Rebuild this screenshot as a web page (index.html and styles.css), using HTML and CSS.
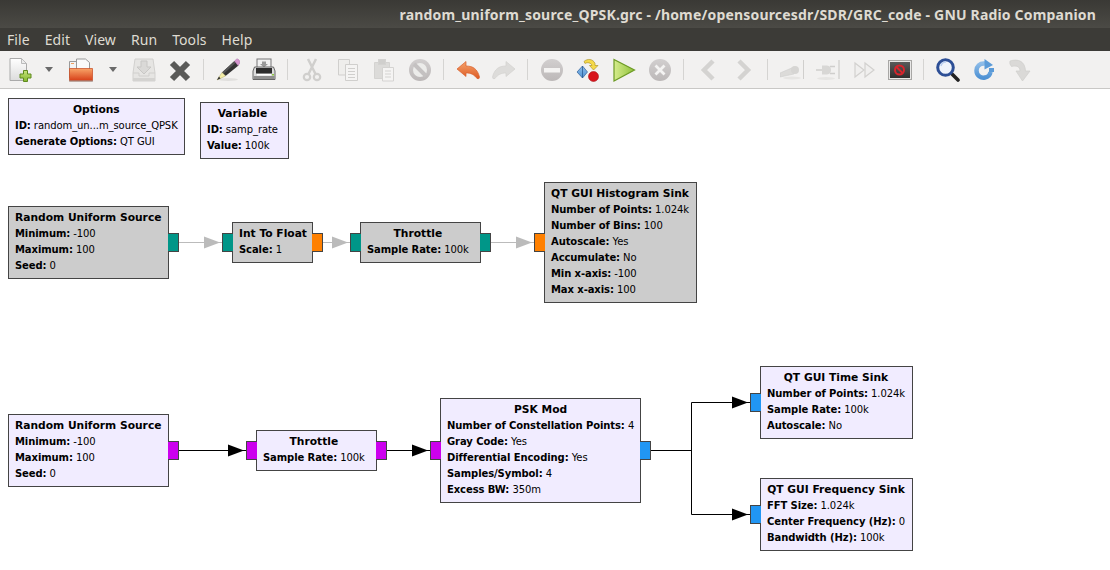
FILE: index.html
```html
<!DOCTYPE html>
<html lang="en">
<head>
<meta charset="utf-8">
<title>GNU Radio Companion</title>
<link rel="stylesheet" href="styles.css">
</head>
<body>
<div class="app">
  <header class="titlebar"><span>random_uniform_source_QPSK.grc - /home/opensourcesdr/SDR/GRC_code - GNU Radio Companion</span></header>
  <nav class="menubar">
    <span class="menu">File</span><span class="menu">Edit</span><span class="menu">View</span><span class="menu">Run</span><span class="menu">Tools</span><span class="menu">Help</span>
  </nav>
  <div class="toolbar">
    <svg width="0" height="0" class="defs">
      <defs>
        <linearGradient id="gPage" x1="0" y1="0" x2="0" y2="1"><stop offset="0" stop-color="#fff"/><stop offset="1" stop-color="#dcdcdc"/></linearGradient>
        <linearGradient id="gFolder" x1="0" y1="0" x2="0" y2="1"><stop offset="0" stop-color="#f8a468"/><stop offset="1" stop-color="#d63c16"/></linearGradient>
        <linearGradient id="gGreen" x1="0" y1="0" x2="0" y2="1"><stop offset="0" stop-color="#c7e37a"/><stop offset="1" stop-color="#84b72e"/></linearGradient>
        <linearGradient id="gPlay" x1="0" y1="0" x2="1" y2="0"><stop offset="0" stop-color="#d6ec8d"/><stop offset="1" stop-color="#8fc13a"/></linearGradient>
        <linearGradient id="gOrange" x1="0" y1="0" x2="0" y2="1"><stop offset="0" stop-color="#f6a26a"/><stop offset="1" stop-color="#dc5a24"/></linearGradient>
        <linearGradient id="gGrey" x1="0" y1="0" x2="0" y2="1"><stop offset="0" stop-color="#d2cfcf"/><stop offset="1" stop-color="#bcb8b8"/></linearGradient>
        <linearGradient id="gBlue" x1="0" y1="0" x2="0" y2="1"><stop offset="0" stop-color="#8dbce8"/><stop offset="1" stop-color="#4f92d4"/></linearGradient>
        <linearGradient id="gBtn" x1="0" y1="0" x2="0" y2="1"><stop offset="0" stop-color="#5a5a5a"/><stop offset="1" stop-color="#2e2e2e"/></linearGradient>
      </defs>
    </svg>
    <button class="tb" aria-label="New"><svg width="24" height="24" viewBox="0 0 24 24"><path d="M2 .5H13.500L18.500 5.500V22.500H2Z" fill="url(#gPage)" stroke="#aaa"/><path d="M13.500 .5V5.500H18.500Z" fill="#ececec" stroke="#bbb"/><path d="M15.500 12.500H19.500V16H23V20H19.500V23.500H15.500V20H12V16H15.500Z" fill="url(#gGreen)" stroke="#5f8a1e"/></svg></button>
    <button class="drop" aria-label="New menu"><i class="caret"></i></button>
    <button class="tb" aria-label="Open"><svg width="24" height="24" viewBox="0 0 24 24"><path d="M.5 3.500H11V20H.5Z" fill="#f4f4f4" stroke="#999"/><path d="M7.500 1H16.500L20.500 4.500V20H7.500Z" fill="#fafafa" stroke="#999"/><rect x="2" y="5" width="3" height="1" fill="#f0a060"/><path d="M.5 10.500H23.500V23H.5Z" fill="url(#gFolder)" stroke="#c9471e" stroke-width=".7"/><path d="M0 23H24" stroke="#999"/></svg></button>
    <button class="drop wide" aria-label="Open menu"><i class="caret"></i></button>
    <button class="tb" aria-label="Save"><svg width="24" height="24" viewBox="0 0 24 24"><path d="M3 1H21L23 15V23H1V15Z" fill="#e6e5e3" stroke="#d2d1cf"/><path d="M1 15H7V18H17V15H23" fill="none" stroke="#d0cfcd"/><path d="M9 3H15V9H19L12 16 5 9H9Z" fill="#dad9d7" stroke="#c8c7c5"/><rect x="1" y="20" width="22" height="3" fill="#d4d3d1"/></svg></button>
    <button class="tb" aria-label="Close"><svg width="24" height="24" viewBox="0 0 24 24"><path d="M4 5 20 21M20 5 4 21" stroke="#5a5a58" stroke-width="6"/></svg></button>
    <i class="sep"></i>
    <button class="tb" aria-label="Rename"><svg width="24" height="24" viewBox="0 0 24 24"><ellipse cx="12" cy="21.500" rx="10" ry="1.500" fill="#e0dfdd"/><path d="M6 14.500 18.500 3 22.500 7.500 9.500 18Z" fill="#333"/><path d="M6 14.500 18.500 3 20 4.500 7.500 16Z" fill="#555"/><path d="M18.500 3 20.500 1.200Q21.500 .5 22.500 1.500L24 3.500Q24.500 4.500 23.500 5.500L22 7.500Z" fill="#d596cf" stroke="#a56aa0" stroke-width=".5"/><path d="M6 14.500 9.500 18 1 22Z" fill="#f3eda6" stroke="#b3ac6a" stroke-width=".5"/><path d="M1 22 3 18.500 4.500 20.500Z" fill="#333"/></svg></button>
    <button class="tb" aria-label="Print"><svg width="24" height="24" viewBox="0 0 24 24"><rect x="5" y="1" width="14" height="10" fill="#f2f2f2" stroke="#777"/><path d="M10 3.500H14V6H16L12 9.500 8 6H10Z" fill="#9a9a9a"/><path d="M2.500 9H21.500L23 13V21.500H1V13Z" fill="#dcdcdc" stroke="#666"/><rect x="4" y="10" width="16" height="5.500" fill="#2c2c2c"/><rect x="1.500" y="18" width="21" height="3" fill="#8f8f8f"/><rect x="5" y="16" width="14" height="1.500" fill="#fff"/><rect x="20" y="16" width="2" height="1.500" fill="#8cc63f"/></svg></button>
    <i class="sep"></i>
    <button class="tb" aria-label="Cut"><svg width="24" height="24" viewBox="0 0 24 24" fill="none" stroke="#d0cfcd"><path d="M8 1 15.500 16M16 1 8.500 16" stroke-width="2.500"/><circle cx="7" cy="19" r="3.200" stroke-width="2.200"/><circle cx="17" cy="19" r="3.200" stroke-width="2.200"/></svg></button>
    <button class="tb" aria-label="Copy"><svg width="24" height="24" viewBox="0 0 24 24" fill="#efeeec" stroke="#d0cfcd"><path d="M2.500 1.500H13.500V17H2.500Z"/><path d="M9.500 6.500H21.500V22.500H9.500Z" fill="#f5f4f3"/><path d="M12 10.500H19M12 13.500H19M12 16.500H19M12 19.500H19" fill="none"/></svg></button>
    <button class="tb" aria-label="Paste"><svg width="24" height="24" viewBox="0 0 24 24" stroke="#d4d3d1"><path d="M2.500 4.500H17.500V20.500H2.500Z" fill="#dcdbd9"/><rect x="6.500" y="1.500" width="7" height="5" fill="#d0cfcd"/><path d="M10.500 9.500H21.500V23H10.500Z" fill="#f5f4f3"/><path d="M13 13H19M13 16H19M13 19H19" fill="none"/></svg></button>
    <button class="tb" aria-label="Delete"><svg width="24" height="24" viewBox="0 0 24 24"><circle cx="12" cy="12" r="11" fill="url(#gGrey)"/><circle cx="12" cy="12" r="7" fill="#ececea"/><path d="M6 6 18 18" stroke="#c4c1c1" stroke-width="4"/></svg></button>
    <i class="sep"></i>
    <button class="tb" aria-label="Undo"><svg width="24" height="24" viewBox="0 0 24 24"><path d="M1 11 10 3.500V8C17 8 21.500 11 23.500 19Q23.500 21.500 21 20.500C18 16.500 15 15 10 15V18.500Z" fill="url(#gOrange)" stroke="#d8602c" stroke-width=".7"/></svg></button>
    <button class="tb" aria-label="Redo"><svg width="24" height="24" viewBox="0 0 24 24"><path d="M23 11 14 3.500V8C7 8 2.500 11 .5 19Q.5 21.500 3 20.500C6 16.500 9 15 14 15V18.500Z" fill="#dddcda" stroke="#d2d1cf" stroke-width=".7"/></svg></button>
    <i class="sep"></i>
    <button class="tb" aria-label="Disable"><svg width="24" height="24" viewBox="0 0 24 24"><circle cx="12" cy="12" r="11" fill="url(#gGrey)"/><rect x="4" y="10" width="16" height="4.500" fill="#f4f3f2"/></svg></button>
    <button class="tb" aria-label="Toggle"><svg width="24" height="24" viewBox="0 0 24 24"><path d="M6.500 8 11.500 14 6.500 20 1 14Z" fill="url(#gBlue)" stroke="#2f5f98" stroke-width=".7"/><path d="M6.500 8V20" stroke="#204f88" stroke-width=".7"/><path d="M8 3.500C11 .5 17 .5 19 5.500V7.500H22L17.500 12 13.500 7.500H16C15 4.500 11 4 9 5.500Z" fill="#f5d94a" stroke="#b0962a" stroke-width=".7"/><circle cx="17.500" cy="18.500" r="5" fill="#d8141c" stroke="#a81016" stroke-width=".6"/></svg></button>
    <button class="tb" aria-label="Run"><svg width="24" height="24" viewBox="0 0 24 24"><path d="M2 1.500 22.500 12 2 23Z" fill="url(#gPlay)" stroke="#6c9a24" stroke-width="1.200"/></svg></button>
    <button class="tb" aria-label="Stop"><svg width="24" height="24" viewBox="0 0 24 24"><circle cx="12" cy="12" r="11" fill="url(#gGrey)"/><path d="M7.500 7.500 16.500 16.500M16.500 7.500 7.500 16.500" stroke="#f4f3f2" stroke-width="2.800"/></svg></button>
    <i class="sep"></i>
    <button class="tb" aria-label="Back"><svg width="24" height="24" viewBox="0 0 24 24"><path d="M17 3 8 12 17 21" fill="none" stroke="#d4d3d1" stroke-width="4.500"/></svg></button>
    <button class="tb" aria-label="Forward"><svg width="24" height="24" viewBox="0 0 24 24"><path d="M7 3 16 12 7 21" fill="none" stroke="#d4d3d1" stroke-width="4.500"/></svg></button>
    <i class="sep"></i>
    <button class="tb" aria-label="Disconnect"><svg width="24" height="24" viewBox="0 0 24 24"><ellipse cx="12" cy="20" rx="9" ry="1.500" fill="#e6e5e3"/><path d="M0 15 14 9V16L0 19Z" fill="#dcdbd9" stroke="#cfcecc" stroke-width=".6"/><circle cx="15" cy="12" r="4" fill="#d6d5d3"/><rect x="23" y="2" width="1" height="19" fill="#d0cfcd"/></svg></button>
    <button class="tb" aria-label="Connect"><svg width="24" height="24" viewBox="0 0 24 24"><ellipse cx="10" cy="20.500" rx="9" ry="1.500" fill="#e6e5e3"/><path d="M0 12H6M14 8.500H19M14 15.500H19" stroke="#cfcecc" stroke-width="1.600"/><path d="M6 7.500H11A4.500 4.500 0 0 1 15 12 4.500 4.500 0 0 1 11 16.500H6Z" fill="#d8d7d5"/><rect x="22" y="2" width="2" height="19" fill="#dcdbd9"/></svg></button>
    <button class="tb" aria-label="Skip"><svg width="24" height="24" viewBox="0 0 24 24" fill="#f0efee" stroke="#d2d1cf" stroke-width="1.200"><path d="M3 5 12 12 3 19Z"/><path d="M13 5 22 12 13 19Z"/></svg></button>
    <button class="tb" aria-label="Kill"><svg width="24" height="24" viewBox="0 0 24 24"><rect x=".5" y="2.500" width="23" height="19" fill="#e8e7e6" stroke="#a8a7a5"/><rect x="2" y="4" width="20" height="16" fill="url(#gBtn)"/><circle cx="11.500" cy="12" r="4.500" fill="none" stroke="#d8242c" stroke-width="2"/><path d="M8.500 9 14.500 15" stroke="#d8242c" stroke-width="2"/></svg></button>
    <i class="sep"></i>
    <button class="tb" aria-label="Find"><svg width="24" height="24" viewBox="0 0 24 24"><path d="M15 15 22 22" stroke="#222" stroke-width="3.600" stroke-linecap="round"/><circle cx="9.500" cy="9.500" r="7.800" fill="#eef3fb" stroke="#2d4f96" stroke-width="3"/><path d="M5 8A5 5 0 0 1 10 4" fill="none" stroke="#b9cff0" stroke-width="1.500"/></svg></button>
    <button class="tb" aria-label="Reload"><svg width="24" height="24" viewBox="0 0 24 24"><path d="M13 5.500C7.500 5 4.500 8.500 4.500 12.500 4.500 17.500 9 20.500 13 19.500 16 19 18 17 18.500 14" fill="none" stroke="url(#gBlue)" stroke-width="4.500"/><path d="M12.500 1 21 7 12.500 11.500Z" fill="#5b9bd8"/><path d="M17 10H22V14H17Z" fill="#5b9bd8"/></svg></button>
    <button class="tb" aria-label="Turn"><svg width="24" height="24" viewBox="0 0 24 24"><path d="M2 3C10 .5 17 3 17.500 13H22L14.500 23 8 13H12C12 8 8 7.500 3.500 8.500Q1 6 2 3Z" fill="#dad9d7" stroke="#cfcecc" stroke-width=".7"/></svg></button>
  </div>
  <main class="canvas">
    <svg class="wires" width="1110" height="481" viewBox="0 0 1110 481">
      <g class="wire-off">
        <path d="M179 153.500H222M323 153.500H350M491 153.500H534"/>
        <polygon points="204,147.500 204,159.500 220,153.500"/>
        <polygon points="332,147.500 332,159.500 348,153.500"/>
        <polygon points="516,147.500 516,159.500 532,153.500"/>
      </g>
      <g class="wire-on">
        <path d="M179 361.500H246M387 361.500H430M651 361.500H691.500M691.500 313.500V425.500M691.500 313.500H750M691.500 425.500H750"/>
        <polygon points="228,355.500 228,367.500 244,361.500"/>
        <polygon points="412,355.500 412,367.500 428,361.500"/>
        <polygon points="732,307.500 732,319.500 748,313.500"/>
        <polygon points="732,419.500 732,431.500 748,425.500"/>
      </g>
    </svg>

    <section class="block pos-options"><h3>Options</h3><p><b>ID:</b> random_un...m_source_QPSK</p><p><b>Generate Options:</b> QT GUI</p></section>
    <section class="block pos-variable"><h3>Variable</h3><p><b>ID:</b> samp_rate</p><p><b>Value:</b> 100k</p></section>

    <section class="block off pos-rus1"><h3>Random Uniform Source</h3><p><b>Minimum:</b> -100</p><p><b>Maximum:</b> 100</p><p><b>Seed:</b> 0</p><i class="port out teal"></i></section>
    <section class="block off pos-itf"><h3>Int To Float</h3><p><b>Scale:</b> 1</p><i class="port in teal"></i><i class="port out orange"></i></section>
    <section class="block off pos-thr1"><h3>Throttle</h3><p><b>Sample Rate:</b> 100k</p><i class="port in teal"></i><i class="port out teal"></i></section>
    <section class="block off pos-hist"><h3>QT GUI Histogram Sink</h3><p><b>Number of Points:</b> 1.024k</p><p><b>Number of Bins:</b> 100</p><p><b>Autoscale:</b> Yes</p><p><b>Accumulate:</b> No</p><p><b>Min x-axis:</b> -100</p><p><b>Max x-axis:</b> 100</p><i class="port in orange"></i></section>

    <section class="block pos-rus2"><h3>Random Uniform Source</h3><p><b>Minimum:</b> -100</p><p><b>Maximum:</b> 100</p><p><b>Seed:</b> 0</p><i class="port out magenta"></i></section>
    <section class="block pos-thr2"><h3>Throttle</h3><p><b>Sample Rate:</b> 100k</p><i class="port in magenta"></i><i class="port out magenta"></i></section>
    <section class="block pos-psk"><h3>PSK Mod</h3><p><b>Number of Constellation Points:</b> 4</p><p><b>Gray Code:</b> Yes</p><p><b>Differential Encoding:</b> Yes</p><p><b>Samples/Symbol:</b> 4</p><p><b>Excess BW:</b> 350m</p><i class="port in magenta"></i><i class="port out blue"></i></section>
    <section class="block pos-time"><h3>QT GUI Time Sink</h3><p><b>Number of Points:</b> 1.024k</p><p><b>Sample Rate:</b> 100k</p><p><b>Autoscale:</b> No</p><i class="port in blue"></i></section>
    <section class="block pos-freq"><h3>QT GUI Frequency Sink</h3><p><b>FFT Size:</b> 1.024k</p><p><b>Center Frequency (Hz):</b> 0</p><p><b>Bandwidth (Hz):</b> 100k</p><i class="port in blue"></i></section>
  </main>
</div>
</body>
</html>
```
FILE: styles.css
```css
* { box-sizing: border-box; }
html, body { margin: 0; height: 100%; overflow: hidden; }
.app { width: 1110px; height: 570px; display: flex; flex-direction: column; background: #fff; }

.titlebar {
  height: 28px; flex: none; display: flex; align-items: center; justify-content: flex-end;
  padding-right: 14px;
  background: linear-gradient(#3a3935, #4b4a45);
  color: #dfdbd2; font: 700 14px "Noto Sans", sans-serif; white-space: nowrap; letter-spacing: .18px;
}
.menubar {
  height: 23px; flex: none; display: flex; align-items: center;
  background: #3c3b37; color: #dfdbd2; font: 400 14px "Noto Sans", sans-serif; letter-spacing: .07px;
  padding-left: 7px; padding-bottom: 1px; gap: 15px;
}
.toolbar {
  height: 38px; flex: none; display: flex; align-items: center; padding-left: 2px;
  background: #f2f1f0; border-bottom: 1px solid #c9c8c6;
}
.defs { position: absolute; }
.tb, .drop { border: 0; background: none; padding: 0; margin: 0; height: 37px; display: flex; align-items: center; justify-content: center; flex: none; }
.tb { width: 36px; }
.drop { width: 25px; padding-right: 3px; }
.drop.wide { width: 27px; padding-right: 0; }
.caret { display: block; width: 0; height: 0; border: 4px solid transparent; border-top: 5px solid #6a6a6a; border-bottom: 0; }
.sep { flex: none; width: 1px; height: 21px; margin: 0 6px 0 5px; background: #d5d4d2; }

.canvas { position: relative; flex: 1; background: #fff; overflow: hidden; }
.wires { position: absolute; left: 0; top: 0; }
.wire-off path { fill: none; stroke: #bbb; stroke-width: 1; }
.wire-off polygon { fill: #bbb; }
.wire-on path { fill: none; stroke: #000; stroke-width: 1; }
.wire-on polygon { fill: #000; }

.block {
  position: absolute; padding: 3px 6px 0; border: 1px solid #444;
  display: grid; justify-content: start; align-content: start;
  background: #f1ecff; color: #000;
  font: 400 10px/16px "DejaVu Sans", sans-serif; white-space: nowrap;
}
.block.off { background: #ccc; }
.block h3 { margin: 0; font: 700 10.7px/16px "DejaVu Sans", sans-serif; text-align: center; }
.block p { margin: 0; letter-spacing: -.08px; }
.block b { font-weight: 700; letter-spacing: -.09px; }

.port { position: absolute; top: 50%; width: 11px; height: 19px; margin-top: -9.5px; border: 1px solid #444; }
.port.in { left: -11px; border-right: 0; }
.port.out { right: -11px; border-left: 0; }
.teal { background: #009688; }
.orange { background: #ff8000; }
.magenta { background: #cc00ee; }
.blue { background: #2196f3; }

/* Free-canvas positions of flowgraph nodes (canvas origin: y = 89) */
.pos-options { left: 8px; top: 9px; width: 177px; height: 57px; }
.pos-variable { left: 200px; top: 13px; width: 89px; height: 57px; }
.pos-rus1 { left: 8px; top: 117px; width: 161px; height: 73px; }
.pos-itf { left: 232px; top: 133px; width: 81px; height: 41px; }
.pos-thr1 { left: 360px; top: 133px; width: 121px; height: 41px; }
.pos-hist { left: 544px; top: 93px; width: 153px; height: 121px; }
.pos-rus2 { left: 8px; top: 325px; width: 161px; height: 73px; }
.pos-thr2 { left: 256px; top: 341px; width: 121px; height: 41px; }
.pos-psk { left: 440px; top: 309px; width: 201px; height: 105px; }
.pos-time { left: 760px; top: 277px; width: 153px; height: 73px; }
.pos-freq { left: 760px; top: 389px; width: 153px; height: 73px; }
```
